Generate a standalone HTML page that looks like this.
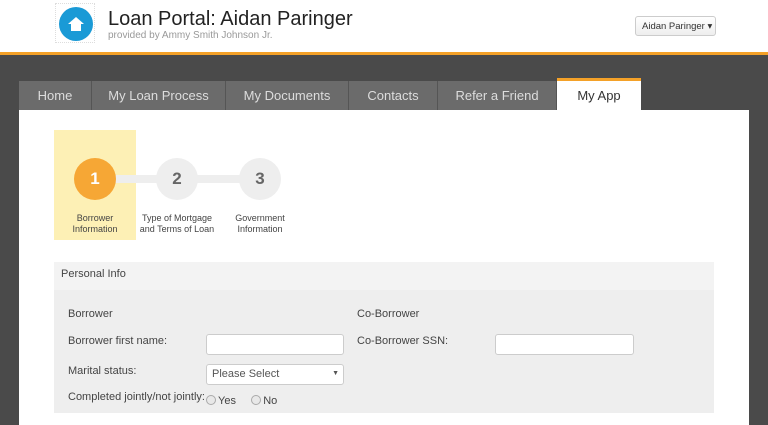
<!DOCTYPE html>
<html><head><style>
*{margin:0;padding:0;box-sizing:border-box}
body{width:768px;height:425px;overflow:hidden;background:#4a4a4a;font-family:"Liberation Sans",sans-serif;position:relative}
.hdr{position:absolute;left:0;top:0;width:768px;height:55px;background:#fff;border-bottom:3px solid #f4a128}
.logo{position:absolute;left:55px;top:3px;width:40px;height:40px;border:1px dotted #ddd;}
.logo div{position:absolute;left:3px;top:3px;width:34px;height:34px;border-radius:50%;background:#1a9ad6}
.t1{position:absolute;left:108px;top:8px;font-size:20px;color:#222}
.t2{position:absolute;left:108px;top:30px;font-size:10px;color:#999}
.btn{position:absolute;left:635px;top:16px;width:81px;height:20px;border:1px solid #ccc;border-radius:3px;background:linear-gradient(#fff,#eee);font-size:9.5px;color:#333;padding:4px 0 0 6px}
.tab{position:absolute;top:81px;height:29px;background:#6b6b6b;color:#ddd;font-size:13px;text-align:center;line-height:29px;border-right:1px solid #555}
.panel{position:absolute;left:19px;top:110px;width:730px;height:315px;background:#fff}
.s{position:absolute;font-size:13px;color:#444}
input,.sel{position:absolute;background:#fff;border:1px solid #ccc;border-radius:3px;height:21px}
.r{display:inline-block;width:10px;height:10px;border:1px solid #aaa;border-radius:50%;background:#e8e8e8;vertical-align:-1px;margin-right:2px}
</style></head><body>
<div class="hdr">
<div class="logo"><div><svg width="34" height="34" viewBox="0 0 34 34"><path d="M9 17 L17 10 L25 17 H22 V24 H12 V17Z" fill="#fff"/></svg></div></div>
<div class="t1">Loan Portal: Aidan Paringer</div>
<div class="t2">provided by Ammy Smith Johnson Jr.</div>
<div class="btn">Aidan Paringer &#9662;</div>
</div>
<div class="tab" style="left:19px;width:73px">Home</div>
<div class="tab" style="left:92px;width:134px">My Loan Process</div>
<div class="tab" style="left:226px;width:123px">My Documents</div>
<div class="tab" style="left:349px;width:89px">Contacts</div>
<div class="tab" style="left:438px;width:119px">Refer a Friend</div>
<div class="tab" style="left:557px;top:78px;height:32px;width:84px;background:#fff;color:#333;border-top:3px solid #f4a128;border-right:0;line-height:29px">My App</div>
<div class="panel">
<div style="position:absolute;left:35px;top:20px;width:82px;height:110px;background:#fdf0b5"></div>
<div style="position:absolute;left:76px;top:65px;width:165px;height:8px;background:#eee"></div>
<div style="position:absolute;left:55px;top:48px;width:42px;height:42px;border-radius:50%;background:#f6a735;color:#fff;font-weight:bold;font-size:17px;text-align:center;line-height:42px">1</div>
<div style="position:absolute;left:137px;top:48px;width:42px;height:42px;border-radius:50%;background:#eee;color:#666;font-weight:bold;font-size:17px;text-align:center;line-height:42px">2</div>
<div style="position:absolute;left:220px;top:48px;width:42px;height:42px;border-radius:50%;background:#eee;color:#666;font-weight:bold;font-size:17px;text-align:center;line-height:42px">3</div>
<div class="s" style="left:35px;top:103px;width:82px;text-align:center;font-size:9px;line-height:11px">Borrower<br>Information</div>
<div class="s" style="left:114px;top:103px;width:88px;text-align:center;font-size:9px;line-height:11px">Type of Mortgage<br>and Terms of Loan</div>
<div class="s" style="left:196px;top:103px;width:90px;text-align:center;font-size:9px;line-height:11px">Government<br>Information</div>
<div style="position:absolute;left:35px;top:152px;width:660px;height:28px;background:#f3f3f3"></div>
<div style="position:absolute;left:35px;top:180px;width:660px;height:123px;background:#eee"></div>
<div class="s" style="left:42px;top:158px;font-size:11px">Personal Info</div>
<div class="s" style="left:49px;top:198px;font-size:11px">Borrower</div>
<div class="s" style="left:49px;top:225px;font-size:11px">Borrower first name:</div>
<div class="s" style="left:49px;top:255px;font-size:11px">Marital status:</div>
<div class="s" style="left:49px;top:281px;font-size:11px">Completed jointly/not jointly:</div>
<div class="s" style="left:338px;top:198px;font-size:11px">Co-Borrower</div>
<div class="s" style="left:338px;top:225px;font-size:11px">Co-Borrower SSN:</div>
<input style="left:187px;top:224px;width:138px">
<input style="left:476px;top:224px;width:139px">
<div class="sel" style="left:187px;top:254px;width:138px;font-size:11px;color:#555;padding:3px 0 0 5px">Please Select<span style="position:absolute;right:4px;top:5px;font-size:7px">&#9660;</span></div>
<div class="s" style="left:187px;top:285px;font-size:11px"><span class="r"></span>Yes &nbsp; &nbsp; <span class="r"></span>No</div>
</div>
</body></html>
